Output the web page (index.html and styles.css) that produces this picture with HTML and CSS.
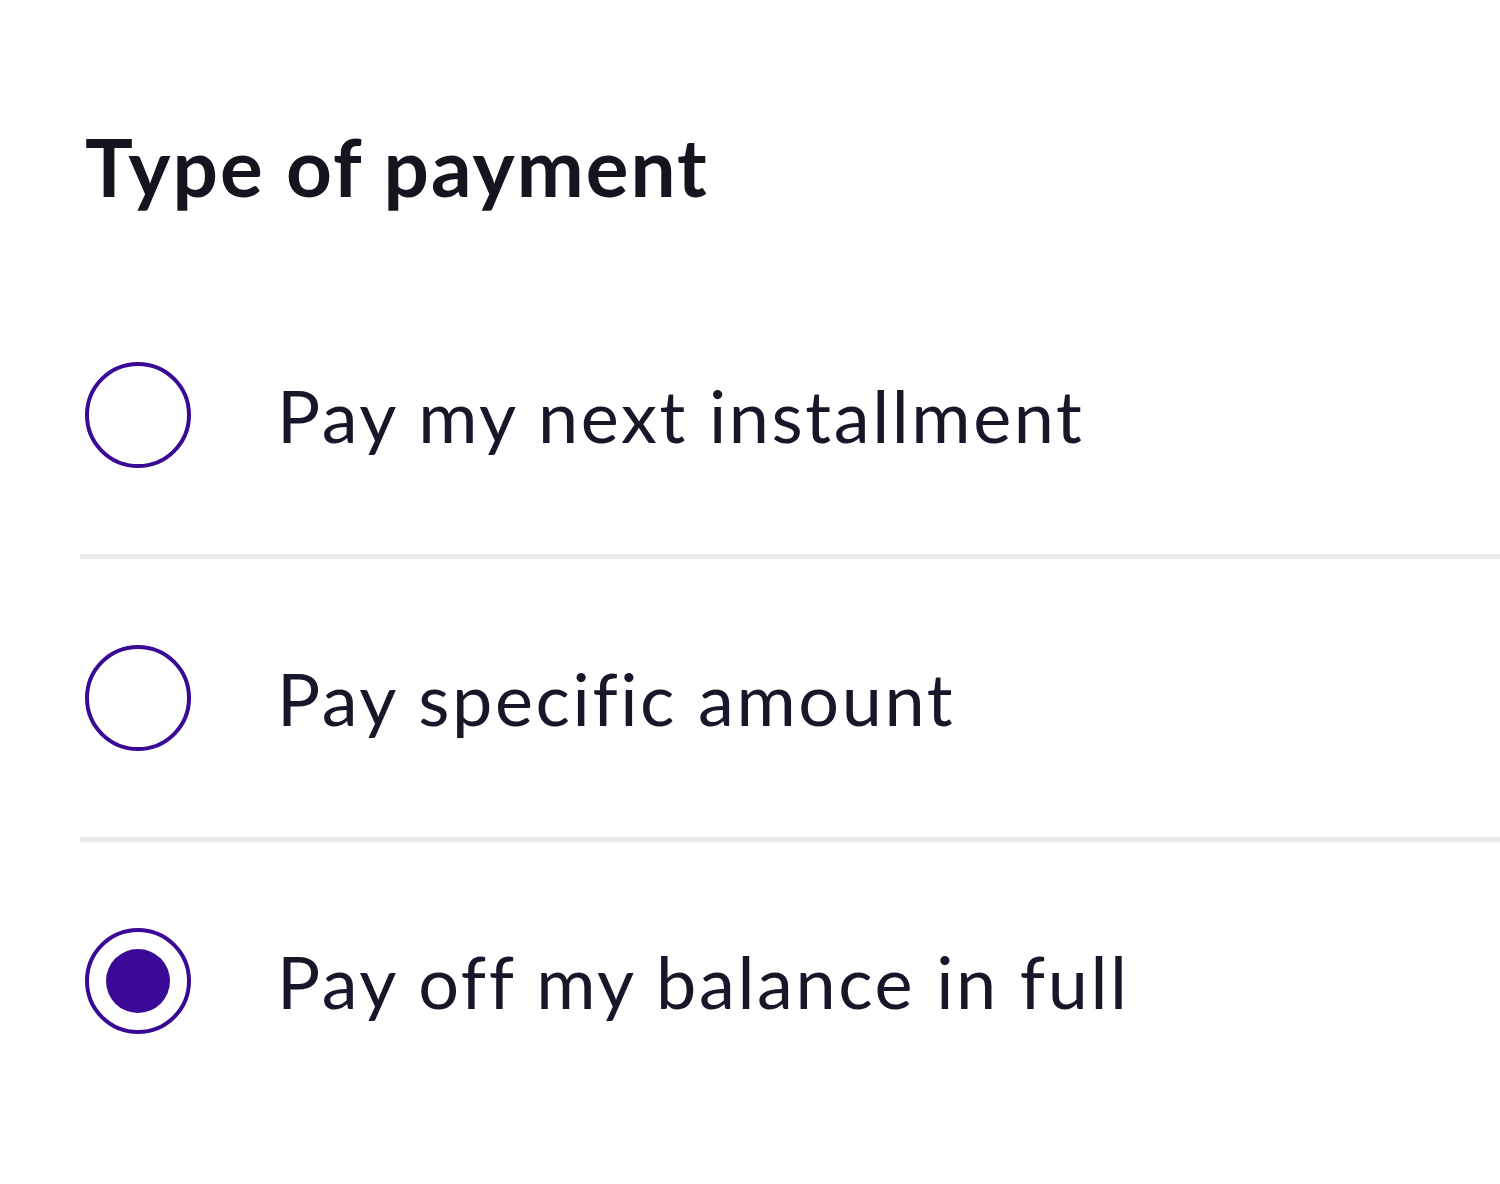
FILE: index.html
```html
<!DOCTYPE html>
<html lang="en">
<head>
    <meta charset="UTF-8">
    <meta name="viewport" content="width=device-width, initial-scale=1.0">
    <title>Type of payment</title>
    <link rel="stylesheet" href="styles.css">
</head>
<body>
    <h1 class="title">Type of payment</h1>

    <!-- Opciones de pago -->
    <form class="options">
        <label class="option">
            <input type="radio" name="payment" value="next">
            <span class="radio"></span>
            <span class="option-text">Pay my next installment</span>
        </label>
        <label class="option">
            <input type="radio" name="payment" value="specific">
            <span class="radio"></span>
            <span class="option-text">Pay specific amount</span>
        </label>
        <label class="option">
            <input type="radio" name="payment" value="full" checked>
            <span class="radio"></span>
            <span class="option-text">Pay off my balance in full</span>
        </label>
    </form>
</body>
</html>
```

FILE: styles.css
```css
body {
    font-family: Lato, "Noto Sans", sans-serif;
    background: #fff;
    color: #17172a;
    margin: 0;
    padding: 0;
}

.title {
    margin: 0;
    height: 150px;
    padding: 126px 0 0 85px;
    font-size: 80px;
    line-height: 80px;
    font-weight: 700;
    letter-spacing: 2px;
    color: #15151f;
}

.options {
    margin: 0 0 0 80px;
}

.option {
    display: flex;
    align-items: center;
    height: 278px;
    padding-left: 5px;
    border-bottom: 5px solid #ebebeb;
    cursor: pointer;
}

.option:last-child {
    border-bottom: none;
}

.option input {
    display: none;
}

.radio {
    box-sizing: border-box;
    width: 106px;
    height: 106px;
    border: 4px solid #3a0a96;
    border-radius: 50%;
    display: flex;
    align-items: center;
    justify-content: center;
    flex-shrink: 0;
}

.option input:checked + .radio::after {
    content: "";
    width: 64px;
    height: 64px;
    border-radius: 50%;
    background: #3a0a96;
}

.option-text {
    margin-left: 86px;
    font-size: 72px;
    line-height: 72px;
    letter-spacing: 2.6px;
}
```
